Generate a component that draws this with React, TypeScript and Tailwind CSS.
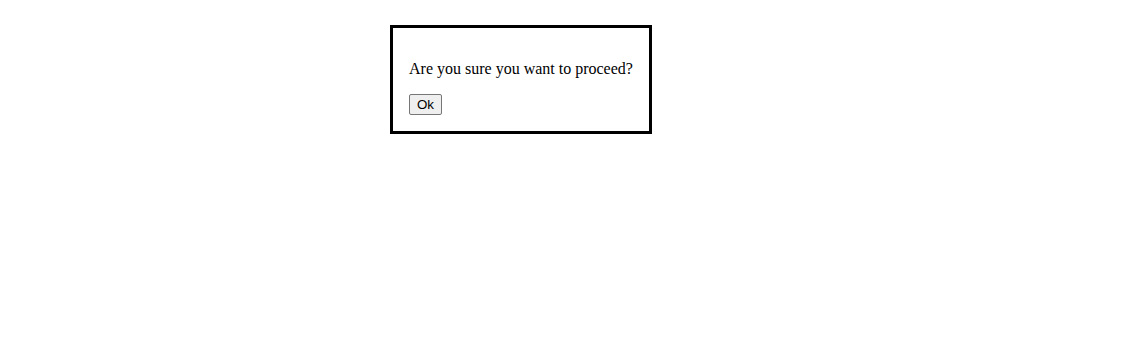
export default function App() {
  return (
    <div className="min-h-[347px] bg-white pt-[25px] pl-[390px]" style={{ fontFamily: '"Liberation Serif", serif' }}>
      <div className="w-[262px] border-[3px] border-black bg-white p-4 text-black">
        <p className="my-4 whitespace-nowrap text-[16px] leading-[normal]">Are you sure you want to proceed?</p>
        <div className="flex">
          <button
            className="block rounded-[2px] border border-[#767676] bg-[#efefef] px-[7px] py-[2px] text-[13.333px] leading-[normal] text-black"
            style={{ fontFamily: '"Liberation Sans", Arial, sans-serif' }}
          >
            Ok
          </button>
        </div>
      </div>
    </div>
  );
}
